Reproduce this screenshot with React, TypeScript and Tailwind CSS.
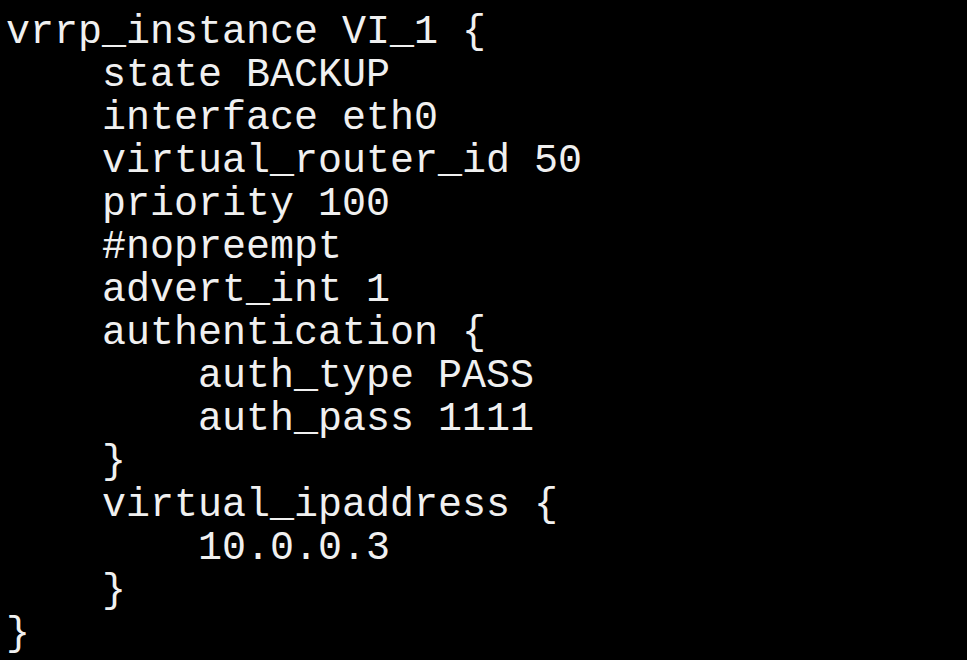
export default function App() {
  const lines = [
    "vrrp_instance VI_1 {",
    "    state BACKUP",
    "    interface eth0",
    "    virtual_router_id 50",
    "    priority 100",
    "    #nopreempt",
    "    advert_int 1",
    "    authentication {",
    "        auth_type PASS",
    "        auth_pass 1111",
    "    }",
    "    virtual_ipaddress {",
    "        10.0.0.3",
    "    }",
    "}",
  ];
  return (
    <div className="w-[967px] h-[660px] bg-black overflow-hidden pl-[6px] pt-[11px]">
      <pre
        className="m-0 text-[40px] leading-[43px] text-[#f0f0f0]"
        style={{ fontFamily: '"Liberation Mono", "Courier New", monospace' }}
      >
        {lines.join("\n")}
      </pre>
    </div>
  );
}
